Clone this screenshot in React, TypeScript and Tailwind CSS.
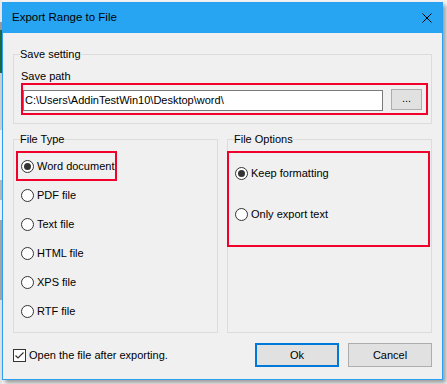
import React from 'react';

function Radio({ checked }: { checked?: boolean }) {
  return (
    <span className="flex h-[13px] w-[13px] shrink-0 items-center justify-center rounded-full border border-[#333333] bg-white">
      {checked && <span className="h-[7px] w-[7px] rounded-full bg-[#333333]" />}
    </span>
  );
}

function RadioRow({ label, checked }: { label: string; checked?: boolean }) {
  return (
    <div className="flex h-[29px] items-center pl-[7px]">
      <Radio checked={checked} />
      <span className="ml-[3px]">{label}</span>
    </div>
  );
}

function GroupBox({ title, className, children }: { title: string; className?: string; children: React.ReactNode }) {
  return (
    <fieldset className={`border border-[#dcdcdc] ${className ?? ''}`}>
      <legend className="ml-[6px] h-[16px] leading-[16px]">{title}</legend>
      {children}
    </fieldset>
  );
}

export default function App() {
  const fileTypes = ['PDF file', 'Text file', 'HTML file', 'XPS file', 'RTF file'];

  return (
    <div className="flex h-[384px] w-[447px] overflow-hidden bg-[#f3f3f3] font-['Liberation_Sans',Arial,sans-serif] text-[11px] text-black">
      {/* sliver of the sheet behind the dialog */}
      <div className="flex w-[2px] shrink-0 flex-col">
        <div className="h-[22px] bg-[#e8e8e8]" />
        <div className="h-[8px] bg-[#9a9a9a]" />
        <div className="h-[43px] bg-[#1f6a43]" />
        <div className="h-[57px] bg-[#cfcfcf]" />
        <div className="h-[50px] bg-[#f2f2f2]" />
        <div className="h-[20px] bg-[#b9b9b9]" />
        <div className="h-[20px] bg-[#efefef]" />
        <div className="h-[80px] bg-[#a6a6a6]" />
        <div className="flex-1 bg-[#e2e2e2]" />
      </div>

      <div className="flex flex-col pt-[2px]">
        <div className="flex h-[378px] w-[441px] flex-col border border-[#2b9ff0] bg-[#f0f0f0] shadow-[3px_3px_4px_rgba(0,0,0,0.35)]">
          {/* title bar */}
          <div className="flex h-[30px] shrink-0 items-center justify-between bg-[#27a4f2] pl-[9px] pr-[10px]">
            <span className="text-[11.5px]">Export Range to File</span>
            <svg width="10" height="10" viewBox="0 0 10 10">
              <path d="M0.5 0.5 L9.5 9.5 M9.5 0.5 L0.5 9.5" stroke="#000" strokeWidth="1" />
            </svg>
          </div>

          <div className="flex flex-1 flex-col px-[10px]">
            <GroupBox title="Save setting" className="mt-[13px] pb-[8px]">
              <div className="ml-[7px] mt-[8px] h-[13px] leading-[13px]">Save path</div>
              <div className="ml-[7px] flex h-[32px] w-[407px] items-start border-2 border-[#f0002a] pt-[4px]">
                <div className="mt-[1px] flex h-[21px] w-[360px] items-center border border-[#7a7a7a] bg-white pl-[1px]">
                  C:\Users\AddinTestWin10\Desktop\word\
                </div>
                <button className="ml-[8px] flex h-[21px] w-[31px] items-center justify-center border border-[#adadad] bg-[#e1e1e1] pb-[2px]">
                  ...
                </button>
              </div>
            </GroupBox>

            <div className="mt-[7px] flex gap-[9px]">
              <GroupBox title="File Type" className="h-[202px] w-[205px]">
                <div className="ml-[2px] mt-[4px] flex h-[30px] w-[101px] items-center border-2 border-[#f0002a] pl-[3px]">
                  <Radio checked />
                  <span className="ml-[3px]">Word document</span>
                </div>
                {fileTypes.map((t) => (
                  <RadioRow key={t} label={t} />
                ))}
              </GroupBox>

              <GroupBox title="File Options" className="h-[202px] w-[205px]">
                <div className="-ml-[1px] mt-[4px] flex h-[96px] w-[203px] flex-col border-2 border-[#f0002a] pl-[6px] pt-[10px]">
                  <div className="flex h-[20px] items-center">
                    <Radio checked />
                    <span className="ml-[3px]">Keep formatting</span>
                  </div>
                  <div className="mt-[21px] flex h-[20px] items-center">
                    <Radio />
                    <span className="ml-[3px]">Only export text</span>
                  </div>
                </div>
              </GroupBox>
            </div>

            <div className="mt-[10px] flex items-center justify-between">
              <label className="flex items-center">
                <span className="flex h-[13px] w-[13px] items-center justify-center border border-[#333333] bg-white">
                  <svg width="11" height="11" viewBox="0 0 11 11">
                    <path d="M1.5 5.5 L4 8 L9.5 2.5" fill="none" stroke="#333333" strokeWidth="1.2" />
                  </svg>
                </span>
                <span className="ml-[3px]">Open the file after exporting.</span>
              </label>
              <div className="flex gap-[9px]">
                <button className="h-[24px] w-[84px] border-2 border-[#0078d7] bg-[#e1e1e1]">Ok</button>
                <button className="h-[24px] w-[84px] border border-[#adadad] bg-[#e1e1e1]">Cancel</button>
              </div>
            </div>
          </div>
        </div>
      </div>
    </div>
  );
}
